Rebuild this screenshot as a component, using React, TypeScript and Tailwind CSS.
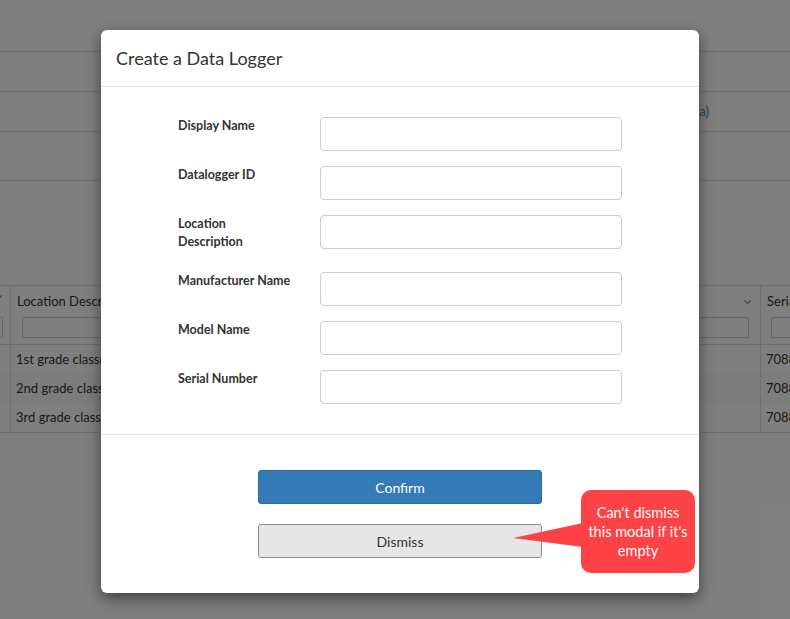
import React from 'react';

const fields = [
  { label: ['Display Name'] },
  { label: ['Datalogger ID'] },
  { label: ['Location', 'Description'] },
  { label: ['Manufacturer Name'] },
  { label: ['Model Name'] },
  { label: ['Serial Number'] },
];

const rows = ['1st grade classroom', '2nd grade classroom', '3rd grade classroom'];

function Chevron() {
  return (
    <svg width="9" height="6" viewBox="0 0 9 6" className="text-[#888]">
      <path d="M1 1.2 L4.5 4.7 L8 1.2" fill="none" stroke="currentColor" strokeWidth="1.1" />
    </svg>
  );
}

// the page under the modal
function BackgroundPage() {
  return (
    <div className="flex flex-col whitespace-nowrap text-[13px] text-[#333]">
      <div className="h-[52px] border-b border-[#dedede]" />
      <div className="h-[40px] border-b border-[#dedede]" />
      <div className="flex h-[40px] items-center border-b border-[#dedede]">
        <div className="w-[709px] text-right text-[#337ab7]">(View Raw Data)</div>
      </div>
      <div className="h-[49px] border-b border-[#dedede]" />
      <div className="h-[104px]" />
      <div className="flex w-[1000px] flex-col border-y border-[#dedede]">
        <div className="flex h-[59px] border-b border-[#dedede]">
          <div className="flex w-[11px] shrink-0 flex-col justify-between overflow-hidden border-r border-[#dedede] pb-[6px] pt-[8px]">
            <div className="-ml-[6px] flex"><Chevron /></div>
            <div className="h-[21px] w-[3px] rounded-r-[2px] border border-l-0 border-[#ccc] bg-white" />
          </div>
          <div className="flex w-[749px] shrink-0 flex-col justify-between px-[11px] pb-[6px] pt-[6px]">
            <div className="flex items-center justify-between">
              <span className="-ml-[5px]">Location Description</span>
              <span className="mr-[-3px]"><Chevron /></span>
            </div>
            <div className="h-[21px] rounded-[2px] border border-[#ccc] bg-white" />
          </div>
          <div className="flex w-[240px] shrink-0 flex-col justify-between border-l border-[#dedede] pb-[6px] pl-[10px] pr-[10px] pt-[6px]">
            <span className="-ml-[4px]">Serial Number</span>
            <div className="h-[21px] rounded-[2px] border border-[#ccc] bg-white" />
          </div>
        </div>
        {rows.map((r, i) => (
          <div key={r} className={`flex h-[29px] ${i === 1 ? 'bg-[#f9f9f9]' : 'bg-white'}`}>
            <div className="w-[11px] shrink-0 border-r border-[#dedede]" />
            <div className="flex w-[749px] shrink-0 items-center px-[5px]">{r}</div>
            <div className="flex w-[240px] shrink-0 items-center border-l border-[#dedede] px-[5px]">70885421</div>
          </div>
        ))}
      </div>
    </div>
  );
}

export default function App() {
  return (
    <div
      className="relative h-[619px] w-[790px] overflow-hidden bg-white"
      style={{ fontFamily: 'Lato, "Noto Sans", sans-serif' }}
    >
      <BackgroundPage />

      <div className="absolute inset-0 bg-black/50">
        <div className="relative ml-[101px] mt-[30px] w-[598px] rounded-[6px] bg-white shadow-[0_5px_15px_rgba(0,0,0,0.5)]">
          <div className="flex h-[57px] items-center border-b border-[#e5e5e5] px-[15px]">
            <h4 className="text-[18px] text-[#333]">Create a Data Logger</h4>
          </div>

          <div className="flex flex-col gap-[15px] border-b border-[#e5e5e5] pb-[30px] pt-[30px]">
            {fields.map((f) => (
              <div key={f.label[0]} className="flex">
                <div className="w-[219px] pb-[6px] pl-[77px] text-[12.5px] font-bold leading-[18px] text-[#333]">
                  {f.label.map((l) => (
                    <div key={l}>{l}</div>
                  ))}
                </div>
                <input className="h-[34px] w-[302px] rounded-[4px] border border-[#ccc] bg-white outline-none" />
              </div>
            ))}
          </div>

          <div className="flex flex-col items-center gap-[20px] pb-[35px] pt-[35px] text-[14px]">
            <button className="h-[34px] w-[284px] rounded-[3px] border border-[#2e6da4] bg-[#337ab7] text-white">
              Confirm
            </button>
            <button className="h-[34px] w-[284px] rounded-[3px] border border-[#8c8c8c] bg-[#e6e6e6] text-[#333]">
              Dismiss
            </button>
          </div>

          {/* annotation */}
          <div className="absolute left-[412px] top-[493px] h-[26px] w-[70px]">
            <svg width="70" height="26" viewBox="0 0 70 26">
              <polygon points="70,0 0,15 70,24" fill="#fd4346" />
            </svg>
          </div>
          <div className="absolute left-[480px] top-[460px] flex h-[83px] w-[114px] items-center justify-center rounded-[10px] bg-[#fd4346] text-center text-[14.5px] leading-[19px] text-white">
            <div>
              Can't dismiss
              <br />
              this modal if it's
              <br />
              empty
            </div>
          </div>
        </div>
      </div>
    </div>
  );
}
